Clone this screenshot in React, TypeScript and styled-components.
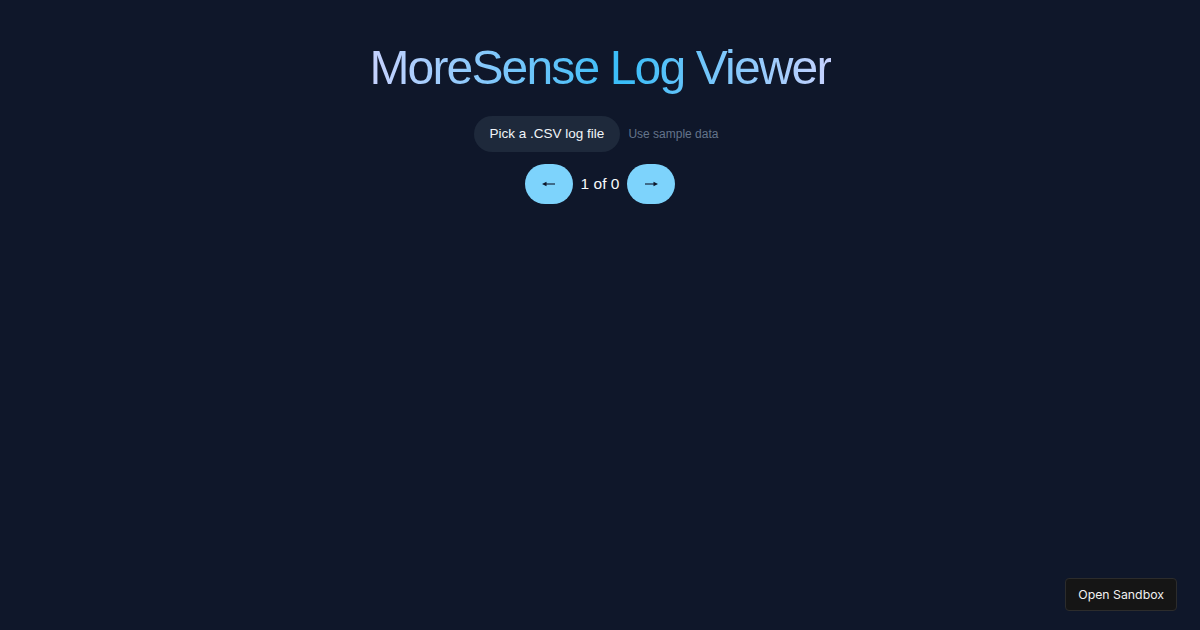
import React, { useState } from 'react'
import styled, { createGlobalStyle } from 'styled-components'

const GlobalStyle = createGlobalStyle`
    html, body {
        margin: 0;
        padding: 0;
        background-color: #0f172a;
        font-family: "Liberation Sans", Arial, sans-serif;
        color: #fff;
    }
`
const Page = styled.div`
    min-height: 630px;
    display: flex;
    flex-direction: column;
    align-items: center;
    padding-top: 36px;
    box-sizing: border-box;
`
const Title = styled.h1`
    font-size: 48px;
    font-weight: 400;
    margin: 0;
    letter-spacing: -1.85px;
    line-height: 64px;
    background: linear-gradient(90deg, #c7d2fe 0%, #38bdf8 55%, #c7d2fe 100%);
    -webkit-background-clip: text;
    background-clip: text;
    color: transparent;
`
const PickerRow = styled.div`
    display: flex;
    align-items: center;
    gap: 8px;
    margin-top: 16px;
    margin-right: 8px;
`
const PickButton = styled.label`
    background-color: #1e293b;
    color: #f1f5f9;
    font-size: 13.5px;
    padding: 0 16px;
    height: 36px;
    line-height: 36px;
    border-radius: 18px;
    cursor: pointer;
`
const SampleLink = styled.button`
    background: none;
    border: none;
    padding: 0;
    color: #64748b;
    font-family: inherit;
    font-size: 12px;
    cursor: pointer;
`
const Pager = styled.div`
    display: flex;
    align-items: center;
    gap: 8px;
    margin-top: 12px;
`
const NavButton = styled.button`
    width: 48px;
    height: 40px;
    border: none;
    border-radius: 20px;
    background-color: #7dd3fc;
    color: #0f172a;
    display: flex;
    align-items: center;
    justify-content: center;
    padding: 0;
    cursor: pointer;
`
const PageLabel = styled.span`
    font-size: 15.5px;
    color: #f8fafc;
`
const SandboxButton = styled.a`
    position: fixed;
    right: 23px;
    bottom: 19px;
    background-color: #151515;
    border: 1px solid #2c2c2c;
    border-radius: 4px;
    color: #f0f0f0;
    font-size: 12.3px;
    padding: 0 12px;
    height: 31px;
    line-height: 31px;
    font-family: Inter, "Liberation Sans", sans-serif;
    text-decoration: none;
`

const Arrow: React.FC<{ dir: 'left' | 'right' }> = ({ dir }) => (
    <svg width="13" height="6" viewBox="0 0 13 6"
        style={{ transform: dir === 'right' ? 'scaleX(-1)' : undefined }}>
        <line x1="3.5" y1="3" x2="13" y2="3" stroke="currentColor" strokeWidth="1.1" />
        <polygon points="0,3 4.5,0.8 4.5,5.2" fill="currentColor" />
    </svg>
)

const App: React.FC = () => {
    const [page, setPage] = useState(1)
    const total = 0
    return (
        <Page>
            <GlobalStyle />
            <Title>MoreSense Log Viewer</Title>
            <PickerRow>
                <PickButton>Pick a .CSV log file</PickButton>
                <SampleLink>Use sample data</SampleLink>
            </PickerRow>
            <Pager>
                <NavButton aria-label="previous" onClick={() => setPage(Math.max(1, page - 1))}>
                    <Arrow dir="left" />
                </NavButton>
                <PageLabel>{`${page} of ${total}`}</PageLabel>
                <NavButton aria-label="next" onClick={() => setPage(page + 1)}>
                    <Arrow dir="right" />
                </NavButton>
            </Pager>
            <SandboxButton href="#">Open Sandbox</SandboxButton>
        </Page>
    )
}
export default App
